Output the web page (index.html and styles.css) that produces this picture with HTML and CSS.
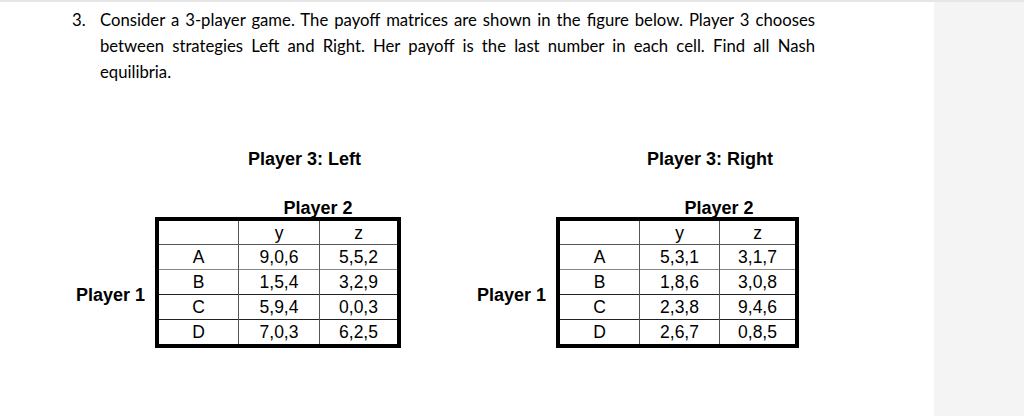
FILE: index.html
```html
<!DOCTYPE html>
<html>
<head>
<meta charset="utf-8">
<link rel="stylesheet" href="styles.css">
</head>
<body>
<div class="page">
  <main class="doc">
    <div class="question">
      <span class="num">3.</span>
      <div class="qtext">
        <span class="line just">Consider a 3-player game. The payoff matrices are shown in the figure below. Player 3 chooses</span>
        <span class="line just">between strategies Left and Right. Her payoff is the last number in each cell. Find all Nash</span>
        <span class="line">equilibria.</span>
      </div>
    </div>
    <div class="figure">
      <section class="panel">
        <div class="title title-left">Player 3: Left</div>
        <div class="p2">Player 2</div>
        <div class="p1">Player 1</div>
        <table class="matrix">
          <tr><td></td><td>y</td><td>z</td></tr>
          <tr class="r-light"><td>A</td><td>9,0,6</td><td>5,5,2</td></tr>
          <tr class="r-lighter"><td>B</td><td>1,5,4</td><td>3,2,9</td></tr>
          <tr><td>C</td><td>5,9,4</td><td>0,0,3</td></tr>
          <tr><td>D</td><td>7,0,3</td><td>6,2,5</td></tr>
        </table>
      </section>
      <section class="panel">
        <div class="title title-right">Player 3: Right</div>
        <div class="p2">Player 2</div>
        <div class="p1">Player 1</div>
        <table class="matrix narrow">
          <tr><td></td><td>y</td><td>z</td></tr>
          <tr class="r-light"><td>A</td><td>5,3,1</td><td>3,1,7</td></tr>
          <tr class="r-lighter"><td>B</td><td>1,8,6</td><td>3,0,8</td></tr>
          <tr><td>C</td><td>2,3,8</td><td>9,4,6</td></tr>
          <tr><td>D</td><td>2,6,7</td><td>0,8,5</td></tr>
        </table>
      </section>
    </div>
  </main>
  <aside class="side"></aside>
</div>
</body>
</html>
```

FILE: styles.css
```css
html, body {
  margin: 0;
  padding: 0;
  background: #fff;
}
.page {
  display: flex;
  width: 1024px;
  height: 416px;
  border-top: 2px solid #e6e6e6;
  box-sizing: border-box;
  overflow: hidden;
}
.doc {
  width: 934px;
  flex: none;
  background: #fff;
}
.side {
  flex: 1;
  background: #f4f4f4;
}
.question {
  display: flex;
  padding: 5px 0 0 72px;
  font-family: Lato, "Open Sans", sans-serif;
  font-size: 16.7px;
  line-height: 26px;
  color: #000;
}
.num {
  width: 28px;
  flex: none;
}
.qtext {
  width: 715px;
}
.line {
  display: block;
  white-space: nowrap;
}
.line.just {
  white-space: normal;
  text-align: justify;
  text-align-last: justify;
}
.figure {
  display: flex;
  gap: 76px;
  padding: 64px 0 0 76px;
  font-family: "Liberation Sans", Arial, sans-serif;
  color: #000;
}
.panel {
  display: grid;
  grid-template-columns: 79px auto;
  grid-template-rows: auto auto auto;
  align-items: start;
}
.title {
  grid-column: 2;
  font-weight: bold;
  font-size: 18px;
  line-height: 20px;
  height: 49px;
}
.title-left { padding-left: 93px; }
.title-right { padding-left: 91px; }
.p2 {
  grid-column: 2;
  font-weight: bold;
  font-size: 18px;
  line-height: 20px;
  margin-left: 82px;
  width: 162px;
  text-align: center;
  margin-bottom: -1px;
  position: relative;
  z-index: 1;
}
.p1 {
  grid-column: 1;
  grid-row: 3;
  font-weight: bold;
  font-size: 18px;
  line-height: 20px;
  margin-top: 68px;
}
.matrix {
  grid-column: 2;
  grid-row: 3;
  border-collapse: collapse;
  border: 4px solid #000;
  font-size: 17.5px;
  width: 246px;
}
.matrix.narrow {
  width: 243px;
}
.matrix td {
  height: 24px;
  padding: 0;
  text-align: center;
  line-height: 20px;
  border-left: 1px solid #555;
  border-top: 1px solid #222;
}
.matrix td:first-child { width: 79px; }
.matrix td:nth-child(2) { width: 80px; }
.matrix.narrow td:nth-child(2) { width: 79px; }
.matrix tr:first-child td {
  border-top: none;
  height: 23px;
}
.matrix tr.r-light td { border-top-color: #555; }
.matrix tr.r-lighter td { border-top-color: #888; }
```
